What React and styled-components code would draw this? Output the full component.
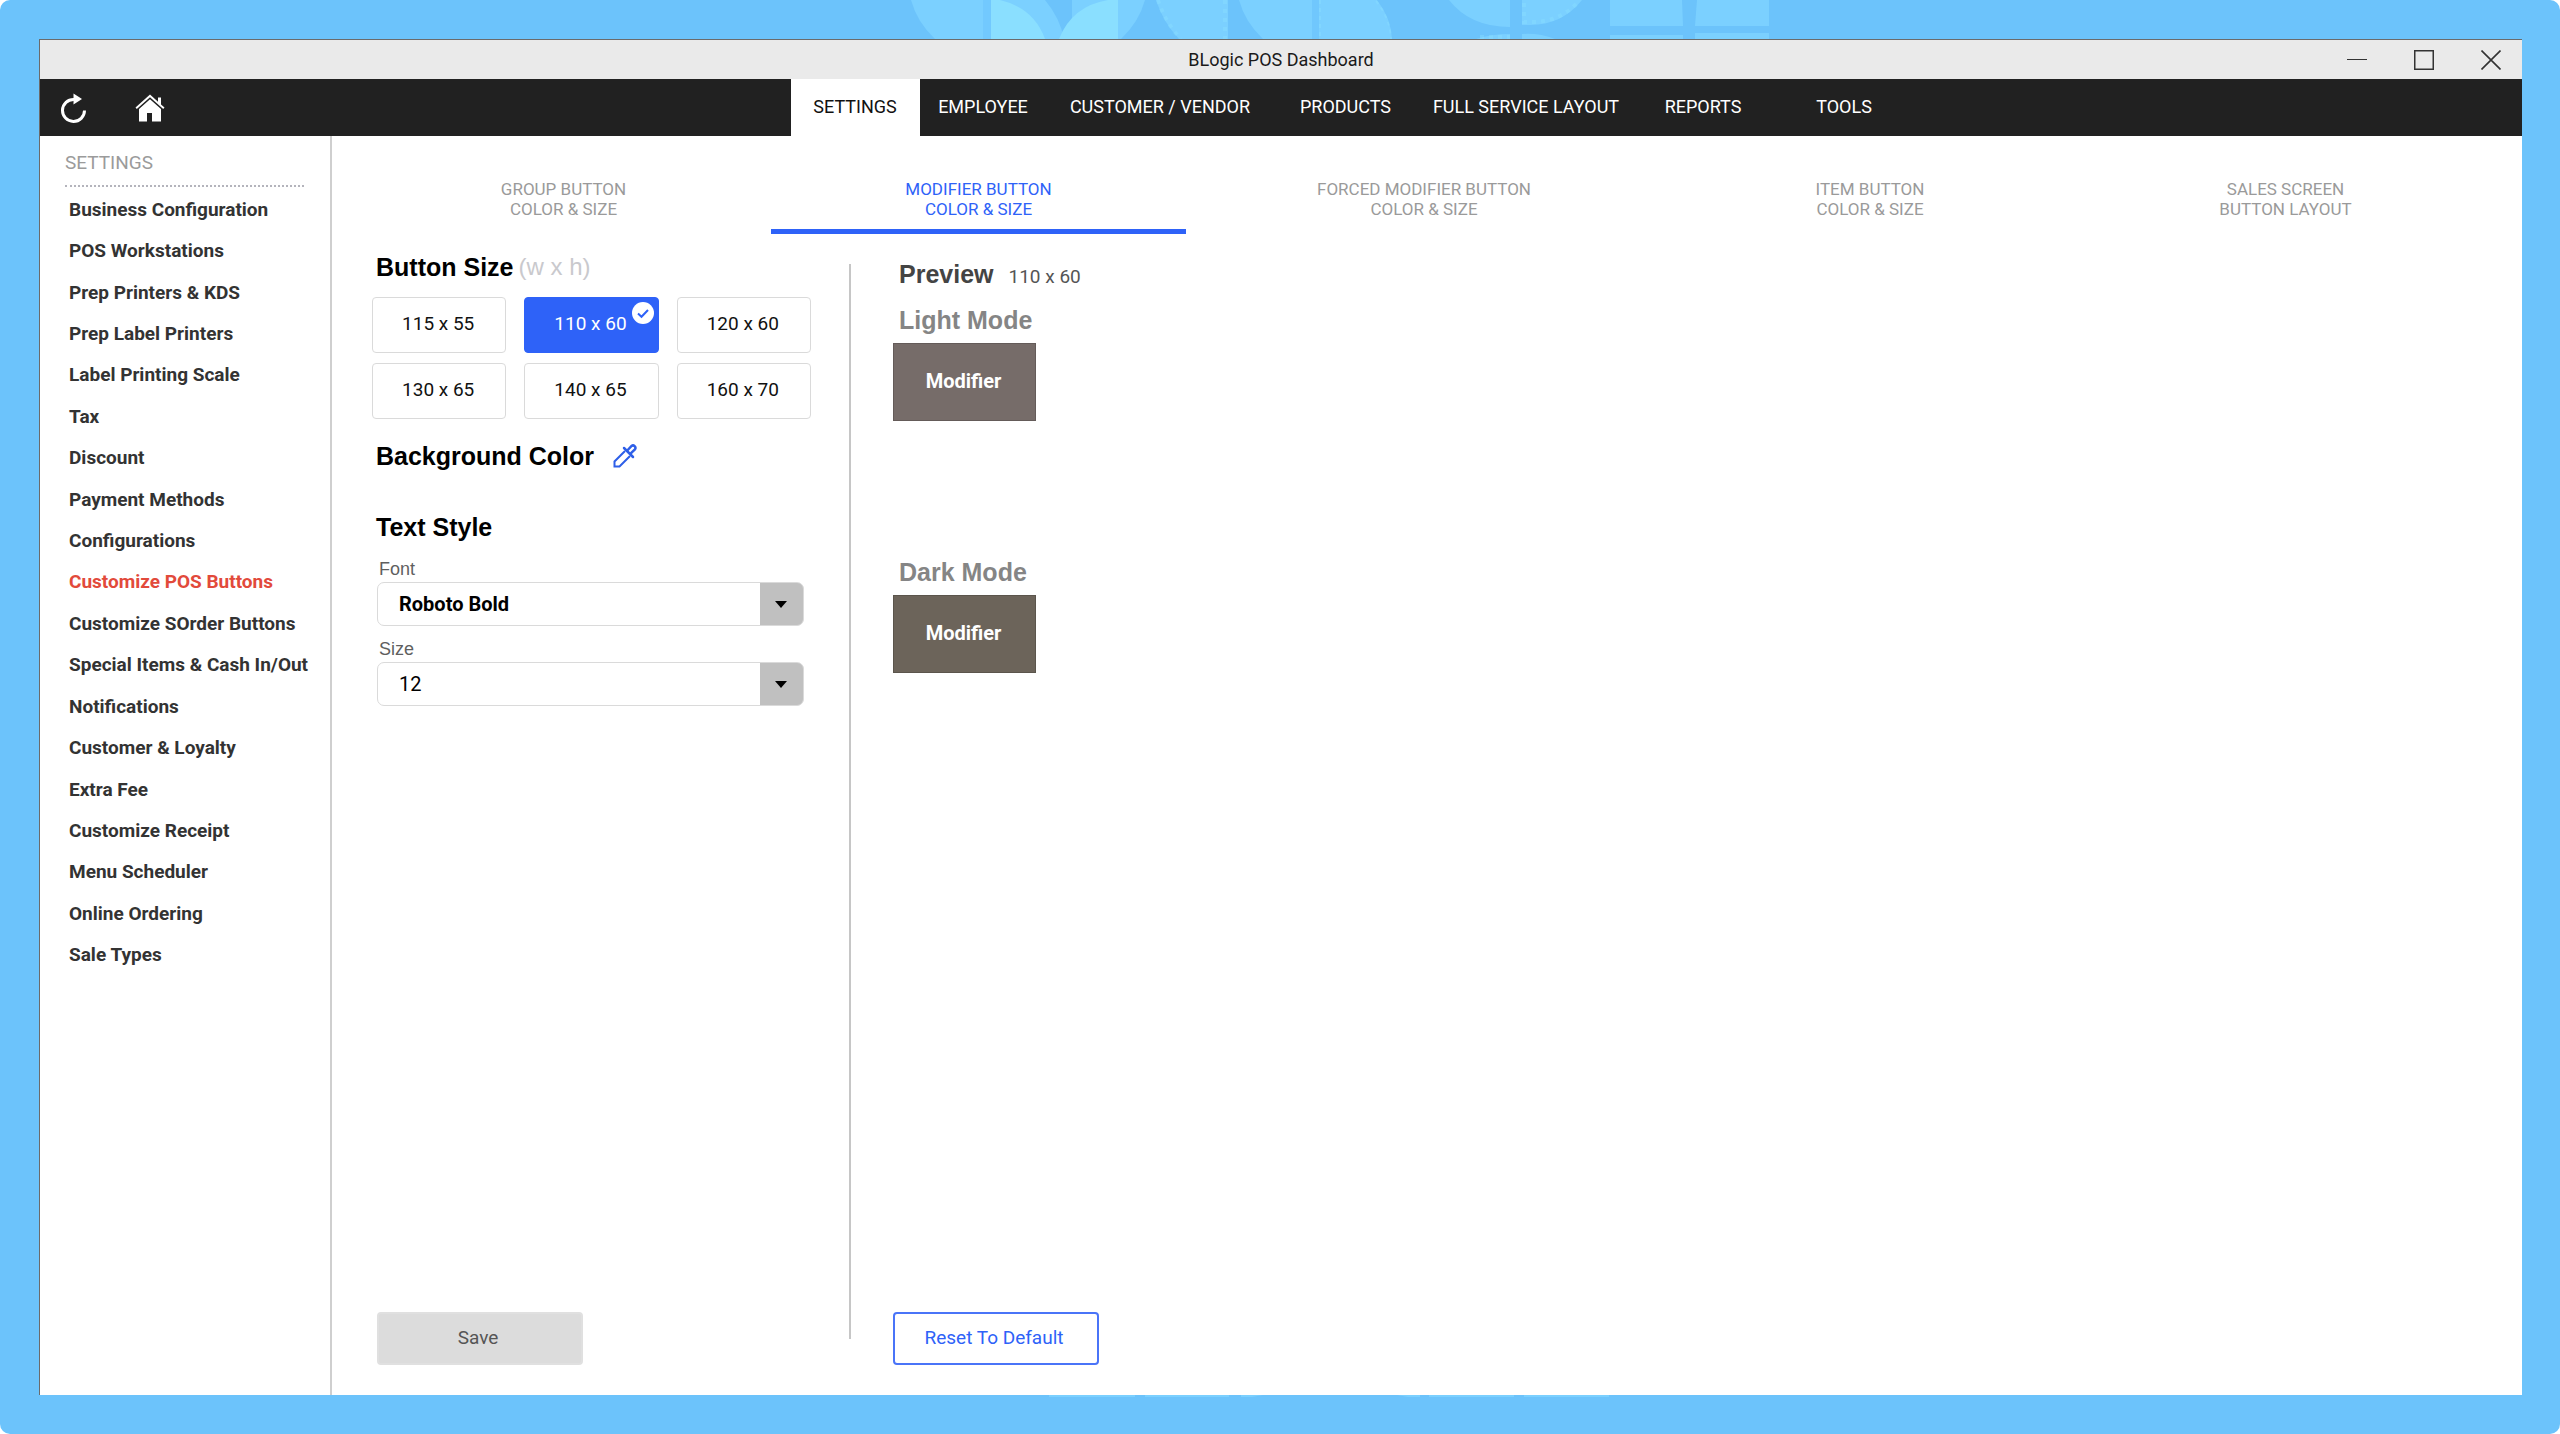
import React, { useState } from "react";
import styled, { createGlobalStyle } from "styled-components";

const GlobalStyle = createGlobalStyle`
  * {
    box-sizing: border-box;
  }
  body {
    margin: 0;
    background: #fff;
    font-family: Roboto, "Liberation Sans", sans-serif;
  }
  button, select {
    font-family: inherit;
    cursor: pointer;
  }
`;

// Blue desktop behind the window
const Desktop = styled.div`
  min-height: 100vh;
  display: grid;
  grid-template-rows: 39px 1fr 39px;
  background: #6cc3fb;
  border-radius: 10px;
  overflow: hidden;
`;

const Pattern = styled.svg`
  display: block;
  width: 100%;
  height: 39px;
`;

const Window = styled.div`
  margin: 0 38px 0 39px;
  display: flex;
  flex-direction: column;
  background: #fff;
  border-top: 1px solid #6b6b6b;
  border-left: 1px solid #6b6b6b;
`;

// Title bar
const TitleBar = styled.header`
  height: 39px;
  display: grid;
  grid-template-columns: 1fr auto 1fr;
  align-items: center;
  background: #eaeaea;
`;

const WindowTitle = styled.h1`
  grid-column: 2;
  margin: 0;
  font-size: 18px;
  font-weight: 400;
  line-height: 24px;
  color: #1a1a1a;
`;

const WindowControls = styled.div`
  display: flex;
  justify-content: flex-end;
  gap: 47px;
  padding-right: 21px;
`;

const IconButton = styled.button`
  display: flex;
  padding: 0;
  border: none;
  background: transparent;
  color: ${(p) => p.$color || "#333"};
`;

// Main nav
const NavBar = styled.nav`
  display: flex;
  height: 57px;
  background: #212121;
`;

const NavTools = styled.div`
  width: 751px;
  display: flex;
  align-items: center;
  gap: 47px;
  padding-left: 20px;
`;

const NavTab = styled.button`
  width: ${(p) => p.$width}px;
  padding: 0 1px 3px 0;
  border: none;
  background: ${(p) => (p.$active ? "#fff" : "transparent")};
  color: ${(p) => (p.$active ? "#111" : "#fff")};
  font-size: 18px;
  white-space: nowrap;
`;

const Main = styled.div`
  flex: 1;
  display: flex;
`;

// Sidebar
const Sidebar = styled.aside`
  width: 292px;
  padding: 14px 26px 0 25px;
  border-right: 2px solid #cfcfcf;
`;

const SidebarTitle = styled.h2`
  margin: 0 0 2px;
  padding-bottom: 9px;
  border-bottom: 2px dotted #b4b4bc;
  font-size: 19px;
  font-weight: 400;
  line-height: 26px;
  color: #9b9b9b;
`;

const SidebarList = styled.ul`
  height: 787px;
  margin: 0;
  padding: 0 0 0 4px;
  list-style: none;
  display: grid;
  grid-auto-rows: 1fr;
  align-items: center;
`;

const SidebarLink = styled.a`
  font-size: 19px;
  font-weight: 700;
  line-height: 24px;
  white-space: nowrap;
  text-decoration: none;
  color: ${(p) => (p.$active ? "#e24a3b" : "#333")};
`;

const Content = styled.main`
  flex: 1;
  display: flex;
  flex-direction: column;
`;

// Second level tabs
const SubTabs = styled.div`
  display: grid;
  grid-template-columns: 415fr 415fr 476fr 416fr 415fr;
  padding: 0 29px 0 24px;
`;

const SubTab = styled.button`
  height: 98px;
  padding: 41px 0 9px;
  border: none;
  border-bottom: 5px solid ${(p) => (p.$active ? "#2e62f8" : "transparent")};
  background: transparent;
  color: ${(p) => (p.$active ? "#2e62f8" : "#9a9a9a")};
  font-size: 17px;
  line-height: 20px;
`;

const Panels = styled.div`
  flex: 1;
  display: grid;
  grid-template-columns: 517px 2px 1fr;
`;

const Options = styled.section`
  display: flex;
  flex-direction: column;
  padding: 18px 45px 30px;
`;

const Divider = styled.div`
  margin: 30px 0 56px;
  background: #c6c6c6;
`;

const Preview = styled.section`
  display: flex;
  flex-direction: column;
  align-items: flex-start;
  padding: 25px 42px 30px;
`;

const Heading = styled.h3`
  display: flex;
  align-items: center;
  margin: 0 0 0 -1px;
  font-family: "Liberation Sans", Arial, sans-serif;
  font-size: 25px;
  font-weight: 700;
  line-height: 30px;
  color: ${(p) => p.$color || "#000"};
`;

const Hint = styled.span`
  margin-left: 5px;
  font-size: 24px;
  font-weight: 400;
  color: #c9c9cd;
`;

const SizeGrid = styled.div`
  display: grid;
  grid-template-columns: repeat(3, 1fr);
  gap: 10px 18px;
  margin: 15px -7px 22px -5px;
`;

const SizeButton = styled.button`
  position: relative;
  height: 56px;
  padding: 0 2px 3px 0;
  border: 1px solid ${(p) => (p.$active ? "#2e62f8" : "#dadada")};
  border-radius: 4px;
  background: ${(p) => (p.$active ? "#2e62f8" : "#fff")};
  color: ${(p) => (p.$active ? "#fff" : "#111")};
  font-size: 19px;
`;

const CheckBadge = styled.svg`
  position: absolute;
  top: 4px;
  right: 4px;
`;

const PickerButton = styled(IconButton)`
  margin-left: 19px;
`;

const TextStyle = styled.div`
  margin-top: 41px;
`;

const FieldGroup = styled.div`
  display: grid;
  gap: 11px;
  margin-top: 15px;
`;

const Field = styled.div`
  display: flex;
  flex-direction: column;
  gap: 1px;
`;

const Label = styled.label`
  padding-left: 2px;
  font-family: "Liberation Sans", Arial, sans-serif;
  font-size: 18px;
  line-height: 24px;
  color: #5f5f5f;
`;

const SelectBox = styled.div`
  display: flex;
  height: 44px;
  border: 1px solid #dadada;
  border-radius: 7px;
  background: linear-gradient(#c0c0c0, #c0c0c0) right / 44px 100% no-repeat border-box;
`;

const Select = styled.select`
  flex: 1;
  padding: 0 0 0 21px;
  border: none;
  appearance: none;
  background: transparent;
  color: #000;
  font-size: 20px;
  font-weight: ${(p) => p.$weight || 400};
`;

const Caret = styled.svg`
  align-self: center;
  margin-right: 16px;
  pointer-events: none;
`;

const ActionButton = styled.button`
  width: 206px;
  height: 53px;
  margin-top: auto;
  padding: 0 4px 2px 0;
  border: 2px solid ${(p) => (p.$outline ? "#4a74f8" : "#e0e0e0")};
  border-radius: 4px;
  background: ${(p) => (p.$outline ? "#fff" : "#dcdcdc")};
  color: ${(p) => (p.$outline ? "#2e62f8" : "#555")};
  font-size: 19px;
`;

const PreviewTitle = styled.div`
  display: flex;
  align-items: baseline;
  gap: 15px;
  padding-left: 7px;
`;

const PreviewSize = styled.span`
  font-size: 19px;
  line-height: 30px;
  color: #555;
`;

const PreviewBlock = styled.div`
  margin-top: ${(p) => p.$top}px;
  h3 {
    padding-left: 7px;
  }
`;

const PosButton = styled.button`
  width: 143px;
  height: 78px;
  margin-top: 8px;
  padding: 0 2px 2px 0;
  display: block;
  border: 1px solid rgba(0, 0, 0, 0.15);
  background: ${(p) => p.$bg};
  color: #fff;
  font-size: 20px;
  font-weight: 700;
`;

const navTabs = [
  { name: "SETTINGS", width: 129 },
  { name: "EMPLOYEE", width: 127 },
  { name: "CUSTOMER / VENDOR", width: 227 },
  { name: "PRODUCTS", width: 144 },
  { name: "FULL SERVICE LAYOUT", width: 217 },
  { name: "REPORTS", width: 137 },
  { name: "TOOLS", width: 145 },
];

const menu = [
  "Business Configuration",
  "POS Workstations",
  "Prep Printers & KDS",
  "Prep Label Printers",
  "Label Printing Scale",
  "Tax",
  "Discount",
  "Payment Methods",
  "Configurations",
  "Customize POS Buttons",
  "Customize SOrder Buttons",
  "Special Items & Cash In/Out",
  "Notifications",
  "Customer & Loyalty",
  "Extra Fee",
  "Customize Receipt",
  "Menu Scheduler",
  "Online Ordering",
  "Sale Types",
];

const subTabs = [
  ["GROUP BUTTON", "COLOR & SIZE"],
  ["MODIFIER BUTTON", "COLOR & SIZE"],
  ["FORCED MODIFIER BUTTON", "COLOR & SIZE"],
  ["ITEM BUTTON", "COLOR & SIZE"],
  ["SALES SCREEN", "BUTTON LAYOUT"],
];

const sizes = ["115 x 55", "110 x 60", "120 x 60", "130 x 65", "140 x 65", "160 x 70"];

const TopPattern = () => (
  <Pattern viewBox="0 0 2560 39" preserveAspectRatio="xMidYMin slice" aria-hidden="true">
    <g fill="#7bd0ff">
      <path d="M911 0Q917 22 935 39H1064Q1060 18 1045 0Z" />
      <path d="M1072 0H1145Q1139 22 1121 39H1072Z" />
      <path d="M1156 0H1228V39H1179Q1163 22 1156 0Z" />
      <path d="M1239 0H1312V39H1263Q1245 22 1239 0Z" />
      <path d="M1319 0H1377Q1391 18 1392 39H1319Z" />
      <path d="M1449 0Q1470 27 1510 27V0Z" />
      <path d="M1522 0H1582Q1562 25 1530 25H1522Z" />
      <path d="M1476 39Q1492 34 1510 34V39Z" />
      <path d="M1522 34Q1540 33 1555 39H1522Z" />
      <path d="M1610 0H1682L1683 26H1610Z" />
      <path d="M1697 0H1769V26H1695Z" />
      <path d="M1610 35H1683V39H1610Z" />
      <path d="M1695 33H1769V39H1695Z" />
    </g>
    <path d="M983 0H991V39H983Z" fill="#72c9fe" />
    <path d="M1312 0H1319V39H1312Z" fill="#70c7fd" />
    <g fill="#8adfff">
      <path d="M991 0H1000Q1034 8 1045 39H991Z" />
      <path d="M1059 39Q1072 6 1108 0H1118V39Z" />
    </g>
    <g fill="none" stroke="#8adfff" strokeWidth="4" strokeDasharray="4 5" opacity="0.4">
      <path d="M1158 0Q1165 22 1181 39" />
      <path d="M1225 0V39" />
      <path d="M1524 3V22H1532Q1560 22 1578 2" />
      <path d="M1480 37H1510" />
    </g>
    <g fill="none" stroke="#8adfff" strokeWidth="2" strokeDasharray="4 4" opacity="0.4">
      <path d="M1320 0V39" />
      <path d="M1376 1Q1390 18 1391 39" />
    </g>
  </Pattern>
);

const BottomPattern = () => (
  <Pattern viewBox="0 0 2560 39" preserveAspectRatio="xMidYMin slice" aria-hidden="true">
    <path
      d="M1049 0H1135V2H1049ZM1145 0H1229V2H1145ZM1241 0H1263L1252 2H1241ZM1397 0H1420V2H1408ZM1429 0H1514V2H1429ZM1524 0H1609V2H1524Z"
      fill="#7bd0ff"
    />
  </Pattern>
);

const RefreshIcon = () => (
  <svg width="28" height="30" viewBox="0 0 28 30">
    <path d="M24.5 17.5A11 11 0 1 1 14 6.5" fill="none" stroke="#fff" strokeWidth="3" />
    <path d="M13.5 0.5L22 6L13.5 11.5Z" fill="#fff" />
  </svg>
);

const HomeIcon = () => (
  <svg width="30" height="28" viewBox="0 0 30 28" fill="#fff">
    <path d="M15 0.5L0.5 13.6L1.8 15L15 3.2L28.2 15L29.5 13.6L26 10.4V3.4H23V7.7Z" />
    <path d="M15 5.2L4 15V27.5H12V19H17V27.5H26V15Z" />
  </svg>
);

const EyedropperIcon = () => (
  <svg width="24" height="24" viewBox="0 0 24 24" fill="none" stroke="#2e5fe8" strokeWidth="2">
    <path d="M12 7L1.5 17.5V22.5H6.5L17 12" />
    <path d="M11 4L20 13" strokeLinecap="round" strokeWidth="2.5" />
    <path d="M13.8 7L18.6 2Q20.1 0.7 21.6 2.2Q23.2 3.8 21.9 5.4L17 10.2" strokeWidth="2.5" />
  </svg>
);

const CaretIcon = () => (
  <Caret width="12" height="7" viewBox="0 0 12 7" aria-hidden="true">
    <path d="M0 0H12L6 7Z" />
  </Caret>
);

export default function App() {
  const [size, setSize] = useState("110 x 60");

  return (
    <>
      <GlobalStyle />
      <Desktop>
        <TopPattern />
        <Window>
          <TitleBar>
            <WindowTitle>BLogic POS Dashboard</WindowTitle>
            <WindowControls>
              <IconButton aria-label="Minimize">
                <svg width="20" height="20" viewBox="0 0 20 20" stroke="currentColor">
                  <path d="M0 9.5H20" />
                </svg>
              </IconButton>
              <IconButton aria-label="Maximize">
                <svg width="20" height="20" viewBox="0 0 20 20" fill="none" stroke="currentColor" strokeWidth="1.5">
                  <rect x="0.75" y="0.75" width="18.5" height="18.5" />
                </svg>
              </IconButton>
              <IconButton aria-label="Close">
                <svg width="20" height="20" viewBox="0 0 20 20" stroke="currentColor" strokeWidth="1.6">
                  <path d="M0.5 0.5L19.5 19.5M19.5 0.5L0.5 19.5" />
                </svg>
              </IconButton>
            </WindowControls>
          </TitleBar>

          <NavBar>
            <NavTools>
              <IconButton aria-label="Refresh">
                <RefreshIcon />
              </IconButton>
              <IconButton aria-label="Home">
                <HomeIcon />
              </IconButton>
            </NavTools>
            {navTabs.map((tab, i) => (
              <NavTab key={tab.name} $width={tab.width} $active={i === 0}>
                {tab.name}
              </NavTab>
            ))}
          </NavBar>

          <Main>
            <Sidebar>
              <SidebarTitle>SETTINGS</SidebarTitle>
              <SidebarList>
                {menu.map((item) => (
                  <li key={item}>
                    <SidebarLink href="#" $active={item === "Customize POS Buttons"}>
                      {item}
                    </SidebarLink>
                  </li>
                ))}
              </SidebarList>
            </Sidebar>

            <Content>
              <SubTabs>
                {subTabs.map(([first, second], i) => (
                  <SubTab key={first} $active={i === 1}>
                    {first}
                    <br />
                    {second}
                  </SubTab>
                ))}
              </SubTabs>

              <Panels>
                <Options>
                  <Heading>
                    Button Size <Hint>(w x h)</Hint>
                  </Heading>
                  <SizeGrid>
                    {sizes.map((s) => (
                      <SizeButton key={s} $active={s === size} onClick={() => setSize(s)}>
                        {s}
                        {s === size && (
                          <CheckBadge width="22" height="22" viewBox="0 0 22 22">
                            <circle cx="11" cy="11" r="11" fill="#fff" />
                            <path d="M6 11.5L9.5 14.8L16 8" fill="none" stroke="#2e62f8" strokeWidth="2" />
                          </CheckBadge>
                        )}
                      </SizeButton>
                    ))}
                  </SizeGrid>

                  <Heading>
                    Background Color
                    <PickerButton aria-label="Pick background color">
                      <EyedropperIcon />
                    </PickerButton>
                  </Heading>

                  <TextStyle>
                    <Heading>Text Style</Heading>
                    <FieldGroup>
                      <Field>
                        <Label htmlFor="font">Font</Label>
                        <SelectBox>
                          <Select id="font" $weight={700} defaultValue="Roboto Bold">
                            <option>Roboto Bold</option>
                          </Select>
                          <CaretIcon />
                        </SelectBox>
                      </Field>
                      <Field>
                        <Label htmlFor="size">Size</Label>
                        <SelectBox>
                          <Select id="size" defaultValue="12">
                            <option>12</option>
                          </Select>
                          <CaretIcon />
                        </SelectBox>
                      </Field>
                    </FieldGroup>
                  </TextStyle>

                  <ActionButton>Save</ActionButton>
                </Options>

                <Divider />

                <Preview>
                  <PreviewTitle>
                    <Heading $color="#444">Preview</Heading>
                    <PreviewSize>{size}</PreviewSize>
                  </PreviewTitle>
                  <PreviewBlock $top={13}>
                    <Heading $color="#858585">Light Mode</Heading>
                    <PosButton $bg="#766c69">Modifier</PosButton>
                  </PreviewBlock>
                  <PreviewBlock $top={136}>
                    <Heading $color="#858585">Dark Mode</Heading>
                    <PosButton $bg="#6c645a">Modifier</PosButton>
                  </PreviewBlock>
                  <ActionButton $outline>Reset To Default</ActionButton>
                </Preview>
              </Panels>
            </Content>
          </Main>
        </Window>
        <BottomPattern />
      </Desktop>
    </>
  );
}
